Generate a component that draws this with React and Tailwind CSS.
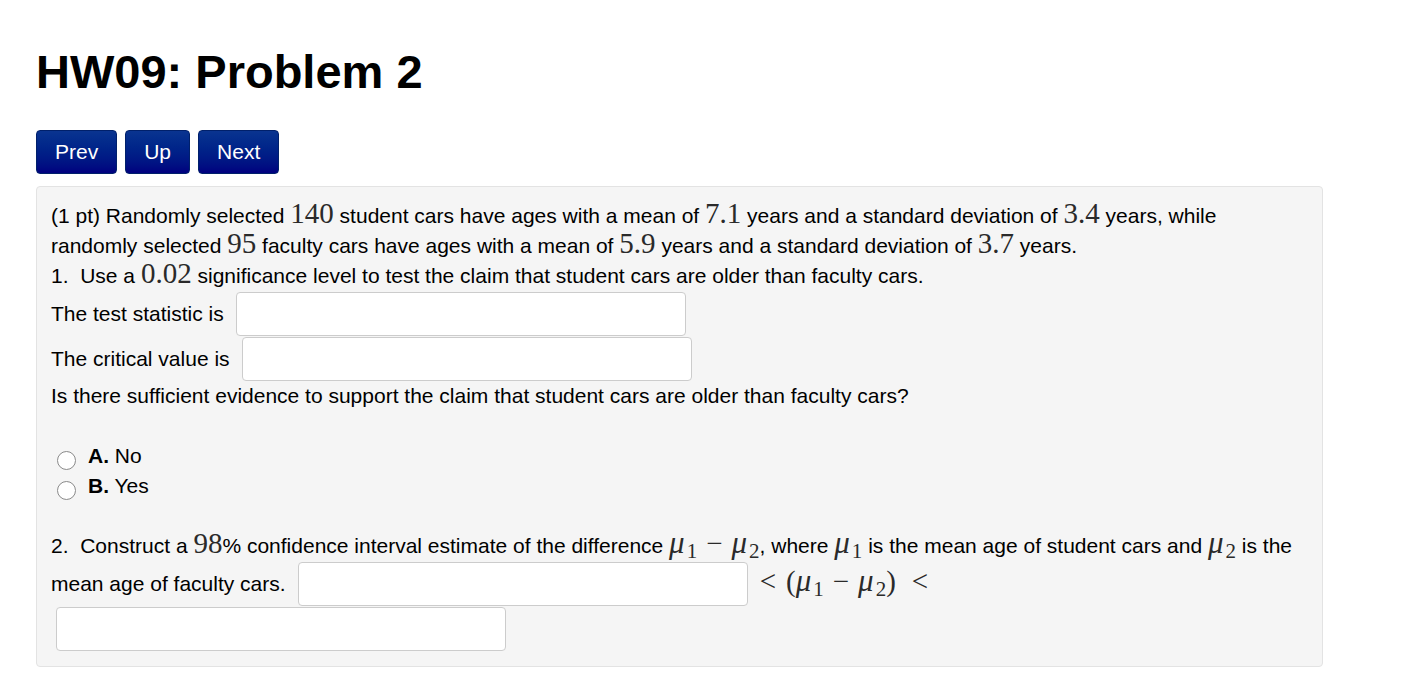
const serif = { fontFamily: '"Liberation Serif", serif' };

const M = ({ children, className = '' }) => (
  <span className={`text-[29px] leading-[0px] text-[#2a2a2a] ${className}`} style={serif}>
    {children}
  </span>
);

const Mu = ({ n }) => (
  <span className="text-[31px] leading-[0px] text-[#2a2a2a]" style={serif}>
    <span className="italic">μ</span>
    <span className="ml-[2px] align-[-5px] text-[21px]">{n}</span>
  </span>
);

const Op = ({ children }) => (
  <span className="px-[9px] text-[29px] leading-[0px] text-[#2a2a2a]" style={serif}>
    {children}
  </span>
);

const Field = ({ className = '' }) => (
  <input
    type="text"
    className={`h-[44px] w-[450px] rounded-[4px] border border-[#cccccc] bg-white ${className}`}
  />
);

const Radio = ({ letter, label }) => (
  <div className="flex h-[30px] items-center">
    <span className="ml-[6px] mt-[9px] inline-block h-[19px] w-[19px] rounded-full border border-[#8a8a8a] bg-white"></span>
    <span className="ml-[12px]">
      <b>{letter}.</b> {label}
    </span>
  </div>
);

export default function App() {
  return (
    <div className="min-h-screen bg-white pl-[36px] pr-[102px] text-black" style={{ fontFamily: '"Liberation Sans", Arial, sans-serif' }}>
      <h1 className="pt-[42px] text-[47px] font-bold leading-[60px]">HW09: Problem 2</h1>

      <div className="mt-[28px] flex gap-[8px]">
        {['Prev', 'Up', 'Next'].map((b) => (
          <button
            key={b}
            className="h-[44px] rounded-[4px] border border-[#00206b] bg-gradient-to-b from-[#0a3490] to-[#00007f] px-[18px] text-[21px] text-white"
          >
            {b}
          </button>
        ))}
      </div>

      <div className="mt-[12px] rounded-[4px] border border-[#e3e3e3] bg-[#f5f5f5] px-[14px] pb-[15px] pt-[14px] text-[21px] leading-[30px]">
        <div>
          (1 pt) Randomly selected <M>140</M> student cars have ages with a mean of <M>7.1</M> years and a standard deviation of <M>3.4</M> years, while
          <br />
          randomly selected <M>95</M> faculty cars have ages with a mean of <M>5.9</M> years and a standard deviation of <M>3.7</M> years.
          <br />
          1.&nbsp;&nbsp;Use a <M>0.02</M> significance level to test the claim that student cars are older than faculty cars.
        </div>

        <div className="flex h-[45px] items-center gap-[12px]">
          <span>The test statistic is</span>
          <Field />
        </div>
        <div className="flex h-[45px] items-center gap-[12px]">
          <span>The critical value is</span>
          <Field />
        </div>
        <div>Is there sufficient evidence to support the claim that student cars are older than faculty cars?</div>

        <div className="mt-[30px]">
          <Radio letter="A" label="No" />
          <Radio letter="B" label="Yes" />
        </div>

        <div className="mt-[30px] whitespace-nowrap">
          2.&nbsp;&nbsp;Construct a <M>98</M>% confidence interval estimate of the difference <Mu n="1" />
          <Op>−</Op>
          <Mu n="2" />, where <Mu n="1" /> is the mean age of student cars and <Mu n="2" /> is the
        </div>
        <div className="flex h-[45px] items-center gap-[12px]">
          <span>mean age of faculty cars.</span>
          <Field />
          <span className="whitespace-nowrap">
            <M>&lt;</M>
            <M className="ml-[10px]">(</M>
            <Mu n="1" />
            <Op>−</Op>
            <Mu n="2" />
            <M>)</M>
            <M className="ml-[16px]">&lt;</M>
          </span>
        </div>
        <div className="pt-[1px]">
          <Field className="ml-[5px]" />
        </div>
      </div>
    </div>
  );
}
